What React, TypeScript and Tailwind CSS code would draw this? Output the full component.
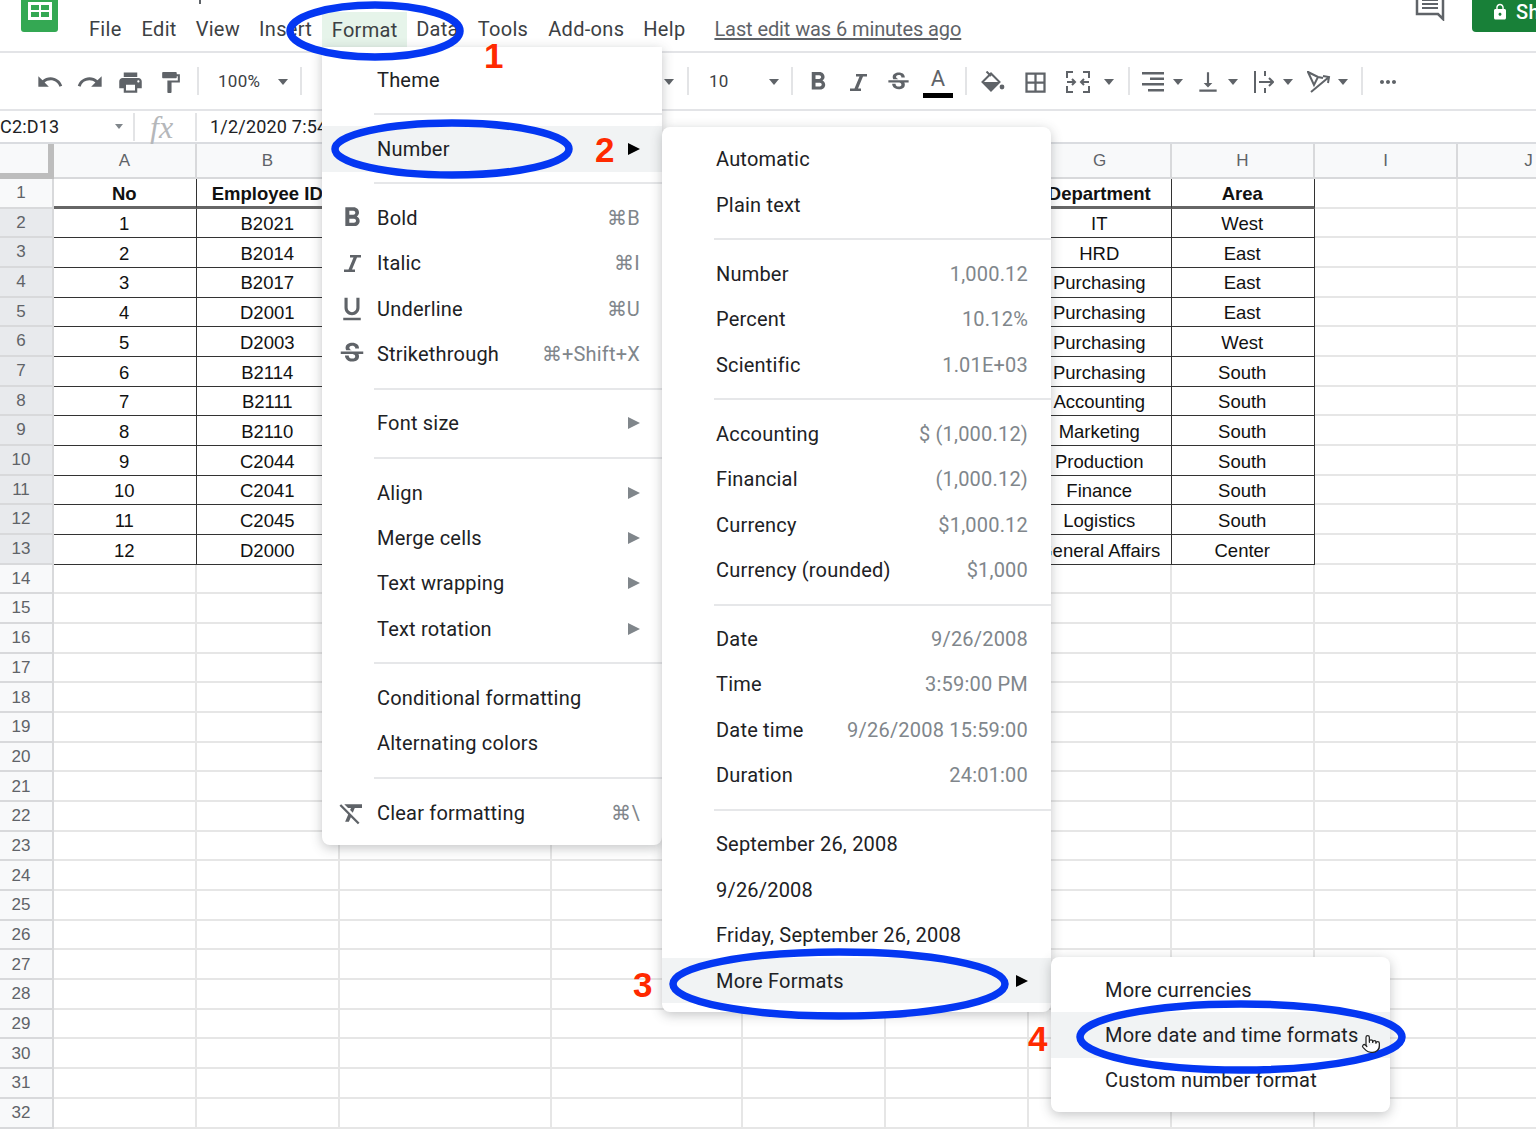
import {
  MdUndo,
  MdRedo,
  MdPrint,
  MdFormatPaint,
  MdFormatBold,
  MdStrikethroughS,
  MdBorderAll,
  MdFormatUnderlined,
  MdFormatClear,
  MdLock,
  MdMoreHoriz,
  MdVerticalAlignBottom,
} from "react-icons/md";
import { Pointer } from "lucide-react";
import type { ReactNode } from "react";

const columns = [
  { label: "A", width: "w-[143px]" },
  { label: "B", width: "w-[143px]" },
  { label: "C", width: "w-[212px]" },
  { label: "D", width: "w-[191px]" },
  { label: "E", width: "w-[143px]" },
  { label: "F", width: "w-[143px]" },
  { label: "G", width: "w-[143px]" },
  { label: "H", width: "w-[143px]" },
  { label: "I", width: "w-[143px]" },
  { label: "J", width: "w-[143px]" },
];

const tableRows = [
  ["No", "Employee ID", "", "", "", "", "Department", "Area"],
  ["1", "B2021", "", "", "", "", "IT", "West"],
  ["2", "B2014", "", "", "", "", "HRD", "East"],
  ["3", "B2017", "", "", "", "", "Purchasing", "East"],
  ["4", "D2001", "", "", "", "", "Purchasing", "East"],
  ["5", "D2003", "", "", "", "", "Purchasing", "West"],
  ["6", "B2114", "", "", "", "", "Purchasing", "South"],
  ["7", "B2111", "", "", "", "", "Accounting", "South"],
  ["8", "B2110", "", "", "", "", "Marketing", "South"],
  ["9", "C2044", "", "", "", "", "Production", "South"],
  ["10", "C2041", "", "", "", "", "Finance", "South"],
  ["11", "C2045", "", "", "", "", "Logistics", "South"],
  ["12", "D2000", "", "", "", "", "General Affairs", "Center"],
];

function ItalicIcon({ w = 17, h = 17 }: { w?: number; h?: number }) {
  return (
    <svg width={w} height={h} viewBox="0 0 17 17" fill="#5f6368">
      <path d="M6 0h11v2.500h-4L8 14.500h3V17H0v-2.500h4.500L9.500 2.500H6z" />
    </svg>
  );
}

function Row({
  label,
  hint,
  icon,
  arrow,
  active,
  pad = "pl-[55px] pr-[22px]",
}: {
  label: string;
  hint?: string;
  icon?: ReactNode;
  arrow?: boolean;
  active?: boolean;
  pad?: string;
}) {
  return (
    <div
      className={`relative flex h-[45.4px] items-center justify-between text-[20px] tracking-[0.2px] text-[#202124] ${pad} ${active ? "bg-[#f1f3f4]" : ""}`}
    >
      {icon && (
        <span className="absolute inset-y-0 left-0 flex w-[60px] items-center justify-center text-[#5f6368]">
          {icon}
        </span>
      )}
      <span>{label}</span>
      {hint && <span className="text-[#80868b]">{hint}</span>}
      {arrow && (
        <span
          className={`h-0 w-0 border-y-[6px] border-l-[12px] border-y-transparent ${active ? "border-l-black" : "border-l-[#80868b]"}`}
        />
      )}
    </div>
  );
}

function Divider({ inset }: { inset: string }) {
  return (
    <div className={`flex h-[23.8px] items-center ${inset}`}>
      <div className="h-[2px] w-full bg-[#e6e7e9]" />
    </div>
  );
}

function Drop() {
  return (
    <span className="mt-[2px] block h-0 w-0 border-x-[5px] border-t-[6px] border-x-transparent border-t-[#5f6368]" />
  );
}

function Sep() {
  return <span className="block h-[28px] w-[2px] bg-[#e3e4e6]" />;
}

function Tool({ children, w = "w-[40px]" }: { children: ReactNode; w?: string }) {
  return (
    <span className={`flex items-center justify-center pt-[2px] text-[#5f6368] ${w}`}>
      {children}
    </span>
  );
}

function Grid() {
  const rows = Array.from({ length: 32 }, (_, i) => i);
  return (
    <div className="font-['Liberation_Sans',sans-serif] text-[18.5px] text-[#111]">
      <div className="flex h-[35px] text-[#5f6368]">
        <div className="h-full w-[54px] shrink-0 border-b-[6px] border-r-[6px] border-[#bdbdbd] bg-[#f8f9fa]" />
        {columns.map((col) => (
          <div
            key={col.label}
            className={`flex shrink-0 items-center justify-center border-b-2 border-r-2 border-[#d8d9db] bg-[#f8f9fa] text-[17px] ${col.width}`}
          >
            {col.label}
          </div>
        ))}
      </div>
      {rows.map((i) => {
        const values = tableRows[i];
        return (
          <div key={i} className="flex h-[29.68px]">
            <div
              className={`flex w-[54px] shrink-0 items-center justify-center border-b-2 border-r-2 border-[#d8d9db] pr-[10px] text-[17px] text-[#5f6368] ${i > 0 && i < 13 ? "bg-[#e8eaed]" : "bg-[#f8f9fa]"}`}
            >
              {i + 1}
            </div>
            {columns.map((col, c) => {
              const inTable = values && c < 8;
              return (
                <div
                  key={col.label}
                  className={`flex shrink-0 items-center justify-center whitespace-nowrap pr-[1.5px] ${col.width} ${inTable ? "border-r-[1.5px] border-[#333]" : "border-r-2 border-[#e6e6e6]"} ${inTable ? (i === 0 ? "border-b-[3px] border-b-[#666] pt-[4px] font-bold" : "border-b-[1.5px] border-b-[#333] pt-[2px]") : "border-b-2 border-b-[#e6e6e6]"}`}
                >
                  {values && c < 8 ? values[c] : ""}
                </div>
              );
            })}
          </div>
        );
      })}
    </div>
  );
}

function FormatMenu() {
  const inset = "pl-[52px]";
  return (
    <div className="absolute left-[322px] top-[47px] w-[340px] rounded-b-lg bg-white py-[10px] shadow-[0_3px_12px_rgba(60,64,67,0.3)]">
      <Row label="Theme" />
      <Divider inset={inset} />
      <Row label="Number" arrow active />
      <Divider inset={inset} />
      <Row label="Bold" hint="⌘B" icon={<MdFormatBold size={32} />} />
      <Row label="Italic" hint="⌘I" icon={<ItalicIcon />} />
      <Row
        label="Underline"
        hint="⌘U"
        icon={<MdFormatUnderlined size={30} />}
      />
      <Row
        label="Strikethrough"
        hint="⌘+Shift+X"
        icon={<MdStrikethroughS size={30} />}
      />
      <Divider inset={inset} />
      <Row label="Font size" arrow />
      <Divider inset={inset} />
      <Row label="Align" arrow />
      <Row label="Merge cells" arrow />
      <Row label="Text wrapping" arrow />
      <Row label="Text rotation" arrow />
      <Divider inset={inset} />
      <Row label="Conditional formatting" />
      <Row label="Alternating colors" />
      <Divider inset={inset} />
      <Row label="Clear formatting" hint="⌘\" icon={<MdFormatClear size={30} />} />
    </div>
  );
}

function NumberMenu() {
  const inset = "pl-[52px]";
  const pad = "pl-[54px] pr-[23px]";
  const items = (list: [string, string?][]) =>
    list.map(([label, hint]) => (
      <Row key={label} label={label} hint={hint} pad={pad} />
    ));
  return (
    <div className="absolute left-[662px] top-[127px] w-[389px] rounded-lg bg-white pb-[9px] pt-[9.5px] shadow-[0_3px_12px_rgba(60,64,67,0.3)]">
      {items([["Automatic"], ["Plain text"]])}
      <Divider inset={inset} />
      {items([
        ["Number", "1,000.12"],
        ["Percent", "10.12%"],
        ["Scientific", "1.01E+03"],
      ])}
      <Divider inset={inset} />
      {items([
        ["Accounting", "$ (1,000.12)"],
        ["Financial", "(1,000.12)"],
        ["Currency", "$1,000.12"],
        ["Currency (rounded)", "$1,000"],
      ])}
      <Divider inset={inset} />
      {items([
        ["Date", "9/26/2008"],
        ["Time", "3:59:00 PM"],
        ["Date time", "9/26/2008 15:59:00"],
        ["Duration", "24:01:00"],
      ])}
      <Divider inset={inset} />
      {items([
        ["September 26, 2008"],
        ["9/26/2008"],
        ["Friday, September 26, 2008"],
      ])}
      <Row label="More Formats" arrow active pad={pad} />
    </div>
  );
}

function MoreMenu() {
  const pad = "pl-[54px] pr-[23px]";
  return (
    <div className="absolute left-[1051px] top-[957px] w-[339px] rounded-lg bg-white pb-[9px] pt-[10px] shadow-[0_3px_12px_rgba(60,64,67,0.3)]">
      <Row label="More currencies" pad={pad} />
      <Row label="More date and time formats" active pad={pad} />
      <Row label="Custom number format" pad={pad} />
    </div>
  );
}

export default function App() {
  return (
    <div className="relative h-[1129px] w-[1536px] overflow-hidden bg-white font-['Roboto',sans-serif]">
      {/* title bar */}
      <div className="relative flex h-[53px] items-start border-b-2 border-[#e3e4e7] pt-[15px] text-[20px] leading-[28px] tracking-[0.3px] text-[#3c4043]">
        <span className="absolute left-[199px] top-0 h-[4px] w-[2px] bg-[#5f6368]" />
        <div className="absolute left-[21px] top-[-8px] flex h-[40px] w-[37px] items-center justify-center rounded-[3px] bg-[#34a853]">
          <div className="mt-[-3px] grid h-[18px] w-[24px] grid-cols-2 gap-[2px] border-[3px] border-white bg-white">
            <span className="bg-[#34a853]" />
            <span className="bg-[#34a853]" />
            <span className="bg-[#34a853]" />
            <span className="bg-[#34a853]" />
          </div>
        </div>
        <span className="ml-[89px]">File</span>
        <span className="ml-[20px]">Edit</span>
        <span className="ml-[19px]">View</span>
        <span className="ml-[19px]">Insert</span>
        <span className="ml-[10px] mt-[-3px] flex h-[35px] w-[85px] items-center justify-center bg-[#e6f4ea]">
          Format
        </span>
        <span className="ml-[9px]">Data</span>
        <span className="ml-[19px]">Tools</span>
        <span className="ml-[20px]">Add-ons</span>
        <span className="ml-[19px]">Help</span>
        <span className="ml-[29px] tracking-[-0.1px] text-[#5f6368] underline underline-offset-2">
          Last edit was 6 minutes ago
        </span>
        <svg
          className="absolute left-[1415px] top-[-7px]"
          width="30"
          height="28"
          viewBox="0 0 30 28"
        >
          <path
            d="M2 2h26v24l-5-5H2z"
            fill="none"
            stroke="#5f6368"
            strokeWidth="2.5"
          />
          <path d="M7 7h16M7 11h16M7 15h16" stroke="#5f6368" strokeWidth="2" />
        </svg>
        <div className="absolute left-[1472px] top-[-8px] flex h-[40px] w-[100px] items-center gap-[7px] rounded-[4px] bg-[#188038] pl-[19px] font-medium text-white">
          <MdLock size={18} className="shrink-0" />
          <span>Share</span>
        </div>
      </div>

      {/* toolbar */}
      <div className="flex h-[58px] items-center border-b-2 border-[#e3e4e7] pl-[30px] text-[#5f6368]">
        <Tool>
          <MdUndo size={28} />
        </Tool>
        <Tool>
          <MdRedo size={28} />
        </Tool>
        <Tool>
          <MdPrint size={27} />
        </Tool>
        <Tool>
          <MdFormatPaint size={25} />
        </Tool>
        <span className="ml-[7px]">
          <Sep />
        </span>
        <span className="ml-[19px] w-[60px] pt-[2px] text-[17px] tracking-[0.3px] text-[#3c4043]">
          100%
        </span>
        <Drop />
        <span className="ml-[12px]">
          <Sep />
        </span>
        <span className="ml-[362px] flex w-[23px]">
          <Drop />
        </span>
        <Sep />
        <span className="ml-[20px] w-[60px] pt-[2px] text-[17px] tracking-[0.3px] text-[#3c4043]">
          10
        </span>
        <span className="flex w-[22px]">
          <Drop />
        </span>
        <Sep />
        <Tool w="w-[50px]">
          <MdFormatBold size={30} />
        </Tool>
        <Tool w="w-[30px]">
          <ItalicIcon />
        </Tool>
        <Tool w="w-[50px]">
          <MdStrikethroughS size={27} />
        </Tool>
        <span className="relative flex h-[28px] w-[30px] flex-col items-center">
          <span className="text-[22px] leading-[24px] text-[#5f6368]">A</span>
          <span className="absolute top-[26px] h-[5px] w-[30px] bg-black" />
        </span>
        <span className="ml-[12px]">
          <Sep />
        </span>
        <Tool w="w-[50px]">
          <svg width="25" height="22" viewBox="0 0 25 22">
            <path d="M3 11h16l-8 8z" fill="#5f6368" />
            <path
              d="M2.500 11L11 2.500 19.500 11 11 19.500zM6.500 0.500l4.500 4.500"
              fill="none"
              stroke="#5f6368"
              strokeWidth="2"
            />
            <circle cx="22" cy="16" r="2.400" fill="#5f6368" />
          </svg>
        </Tool>
        <Tool w="w-[36px]">
          <MdBorderAll size={27} />
        </Tool>
        <Tool w="w-[50px]">
          <svg
            width="24"
            height="22"
            viewBox="0 0 24 22"
            fill="none"
            stroke="#5f6368"
            strokeWidth="2"
          >
            <path d="M1 7V1h6M17 1h6v6M1 15v6h6M17 21h6v-6M1 11h8M15 11h8M6 8l3 3-3 3M18 8l-3 3 3 3" />
          </svg>
        </Tool>
        <span className="ml-[1px] flex w-[10px]">
          <Drop />
        </span>
        <span className="ml-[14px]">
          <Sep />
        </span>
        <span className="ml-[3px]">
          <Tool>
            <svg width="22" height="20" viewBox="0 0 22 20" fill="#5f6368">
              <path d="M0 0h22v2.500H0zM8 5.500h14v2.500H8zM0 11h22v2.500H0zM6 17h16v2.500H6z" />
            </svg>
          </Tool>
        </span>
        <span className="flex w-[10px]">
          <Drop />
        </span>
        <span className="ml-[5px]">
          <Tool>
            <MdVerticalAlignBottom size={26} />
          </Tool>
        </span>
        <span className="flex w-[10px]">
          <Drop />
        </span>
        <span className="ml-[5px]">
          <Tool>
            <svg
              width="21"
              height="22"
              viewBox="0 0 21 22"
              fill="none"
              stroke="#5f6368"
              strokeWidth="2"
            >
              <path d="M2 0v22M12 0v5M12 17v5M6 11h14M16 7l4 4-4 4" />
            </svg>
          </Tool>
        </span>
        <span className="flex w-[10px]">
          <Drop />
        </span>
        <span className="ml-[7px]">
          <Tool w="w-[38px]">
            <svg
              width="24"
              height="22"
              viewBox="0 0 24 22"
              fill="none"
              stroke="#5f6368"
              strokeWidth="2"
            >
              <path d="M1 1l6 13 4-8zM1 1l10 5 5 1M4 21L22 6M16 5l6 1-1 6" />
            </svg>
          </Tool>
        </span>
        <span className="flex w-[10px]">
          <Drop />
        </span>
        <span className="ml-[13px]">
          <Sep />
        </span>
        <Tool w="w-[50px]">
          <MdMoreHoriz size={24} />
        </Tool>
      </div>

      {/* formula bar */}
      <div className="flex h-[33px] items-center border-b-2 border-[#dadce0] text-[18px] text-[#202124]">
        <span className="flex w-[133px] items-center justify-between pr-[10px] tracking-[0.2px]">
          C2:D13
          <span className="h-0 w-0 border-x-[4px] border-t-[5px] border-x-transparent border-t-[#80868b]" />
        </span>
        <span className="h-[28px] w-[2px] bg-[#e3e4e6]" />
        <span className="w-[60px] pl-[15px] font-['Liberation_Serif',serif] text-[32px] leading-[30px] italic text-[#b5b7ba]">
          fx
        </span>
        <span className="mr-[13px] h-[28px] w-[2px] bg-[#e3e4e6]" />
        <span className="tracking-[0.2px]">1/2/2020 7:54:00</span>
      </div>

      <Grid />

      <FormatMenu />
      <NumberMenu />
      <MoreMenu />

      {/* annotations */}
      <svg
        className="pointer-events-none absolute left-0 top-0"
        width="1536"
        height="1129"
        fill="none"
        stroke="#0437f2"
        strokeWidth="7.500"
      >
        <ellipse cx="375" cy="31" rx="85" ry="26" />
        <ellipse cx="452" cy="149" rx="117" ry="26" />
        <ellipse cx="839" cy="984" rx="166" ry="32" />
        <ellipse cx="1241" cy="1037" rx="161" ry="33" />
      </svg>
      <span className="absolute left-[484px] top-[37px] font-['Liberation_Sans',sans-serif] text-[35px] font-bold leading-[38px] text-[#ff2a00]">
        1
      </span>
      <span className="absolute left-[595px] top-[131px] font-['Liberation_Sans',sans-serif] text-[35px] font-bold leading-[38px] text-[#ff2a00]">
        2
      </span>
      <span className="absolute left-[633px] top-[966px] font-['Liberation_Sans',sans-serif] text-[35px] font-bold leading-[38px] text-[#ff2a00]">
        3
      </span>
      <span className="absolute left-[1028px] top-[1020px] font-['Liberation_Sans',sans-serif] text-[35px] font-bold leading-[38px] text-[#ff2a00]">
        4
      </span>
      <span className="absolute left-[1361px] top-[1034px]">
        <Pointer size={20} fill="white" stroke="#222" strokeWidth={1.5} />
      </span>
    </div>
  );
}
